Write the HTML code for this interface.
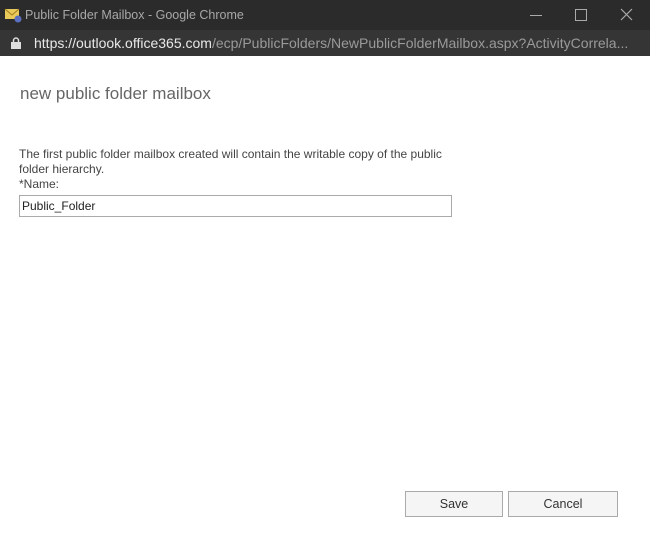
<!DOCTYPE html>
<html><head><style>
body{margin:0;width:650px;height:549px;background:#fff;font-family:"Liberation Sans",sans-serif;position:relative;overflow:hidden}
.title{position:absolute;left:0;top:0;width:650px;height:30px;background:#2b2b2b;color:#a8a8a8;font-size:12.5px}
.addr{position:absolute;left:0;top:30px;width:650px;height:26px;background:#353535;font-size:14px;color:#9a9a9a}
.t{position:absolute}
</style></head><body>
<div class="title">
<svg class="t" style="left:4px;top:7px" width="18" height="16"><rect x="1" y="2" width="14" height="10" fill="#e8c95a"/><path d="M1 2 L8 8 L15 2" stroke="#a07d20" fill="none"/><circle cx="14" cy="12" r="3.5" fill="#5a6fc0"/></svg>
<span class="t" style="left:25px;top:8px">Public Folder Mailbox - Google Chrome</span>
<div class="t" style="left:530px;top:15px;width:12px;height:1px;background:#aaa"></div>
<div class="t" style="left:575px;top:9px;width:10px;height:10px;border:1px solid #aaa"></div>
<svg class="t" style="left:620px;top:8px" width="13" height="13"><path d="M1 1L12 12M12 1L1 12" stroke="#aaa" stroke-width="1.2"/></svg>
</div>
<div class="addr">
<svg class="t" style="left:11px;top:7px" width="10" height="12"><rect x="0" y="5" width="10" height="7" fill="#ddd"/><path d="M2.5 5V3.5a2.5 2.5 0 0 1 5 0V5" stroke="#ddd" stroke-width="1.5" fill="none"/></svg>
<span class="t" style="left:34px;top:5px"><span style="color:#e8e8e8">https://outlook.office365.com</span>/ecp/PublicFolders/NewPublicFolderMailbox.aspx?ActivityCorrela...</span>
</div>
<div class="t" style="left:20px;top:84px;font-size:17px;color:#666;font-weight:300">new public folder mailbox</div>
<div class="t" style="left:19px;top:147px;font-size:12px;color:#444;line-height:15px;width:440px">The first public folder mailbox created will contain the writable copy of the public folder hierarchy.<br>*Name:</div>
<div class="t" style="left:19px;top:195px;width:429px;height:20px;border:1px solid #aaa;font-size:12px;color:#222;line-height:20px;padding-left:2px;box-sizing:content-box">Public_Folder</div>
<div class="t" style="left:405px;top:491px;width:96px;height:24px;border:1px solid #aaa;background:#f5f5f5;font-size:12.5px;color:#333;text-align:center;line-height:24px">Save</div>
<div class="t" style="left:508px;top:491px;width:108px;height:24px;border:1px solid #aaa;background:#f5f5f5;font-size:12.5px;color:#333;text-align:center;line-height:24px">Cancel</div>
</body></html>
